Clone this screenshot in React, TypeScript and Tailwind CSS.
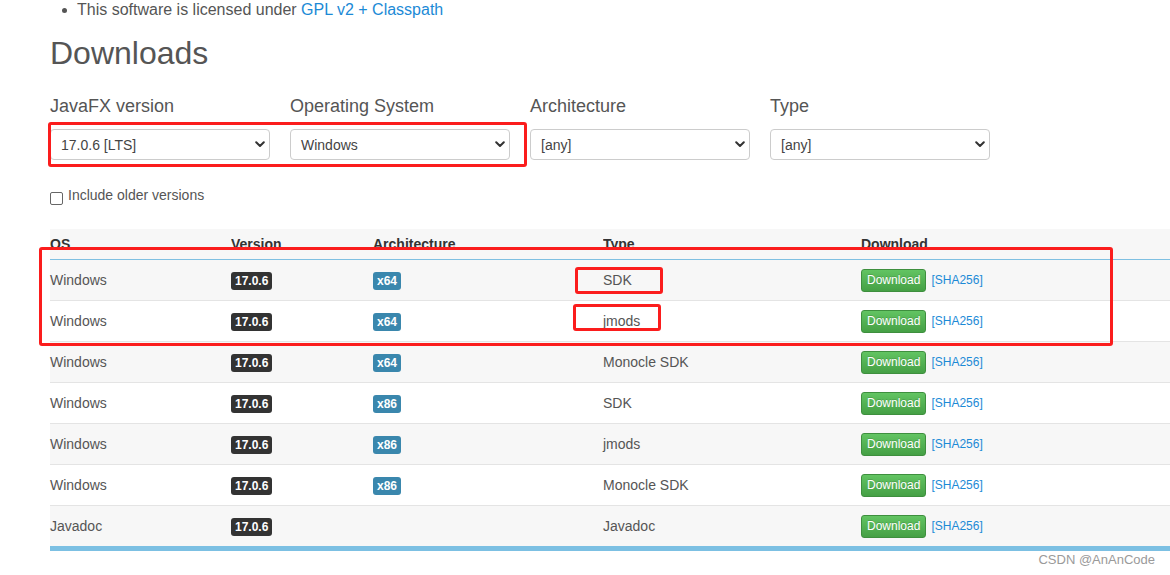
import React from "react";

type Row = { os: string; arch?: string; type: string };

const rows: Row[] = [
  { os: "Windows", arch: "x64", type: "SDK" },
  { os: "Windows", arch: "x64", type: "jmods" },
  { os: "Windows", arch: "x64", type: "Monocle SDK" },
  { os: "Windows", arch: "x86", type: "SDK" },
  { os: "Windows", arch: "x86", type: "jmods" },
  { os: "Windows", arch: "x86", type: "Monocle SDK" },
  { os: "Javadoc", type: "Javadoc" },
];

function Chevron() {
  return (
    <svg width="10" height="7" viewBox="0 0 10 7" className="shrink-0">
      <path d="M1.2 1.2 L5 5 L8.8 1.2" fill="none" stroke="#333" strokeWidth="2" strokeLinecap="round" strokeLinejoin="round" />
    </svg>
  );
}

function Select({ value }: { value: string }) {
  return (
    <div className="mt-[11px] flex h-[31px] w-[220px] items-center justify-between rounded-[4px] border border-[#cccccc] bg-white pl-[10px] pr-[4px] text-[14px] text-[#444]">
      <span className="pt-[1px]">{value}</span>
      <Chevron />
    </div>
  );
}

function Filter({ label, value }: { label: string; value: string }) {
  return (
    <div className="w-[240px]">
      <div className="text-[18px] leading-[24px] text-[#555]">{label}</div>
      <Select value={value} />
    </div>
  );
}

const cols = "grid grid-cols-[181px_142px_230px_258px_1fr]";

export default function App() {
  return (
    <div className="relative h-[575px] w-[1170px] overflow-hidden bg-white font-['Liberation_Sans',Arial,sans-serif]">
      {/* top bullet line */}
      <div className="flex h-[20px] items-center pl-[62px] text-[16px] leading-[20px] text-[#555]">
        <span className="mr-[10px] h-[5px] w-[5px] rounded-full bg-[#555]" />
        <span>
          This software is licensed under <span className="text-[#1c8ad6]">GPL v2 + Classpath</span>
        </span>
      </div>

      <div className="pl-[50px]">
        <h2 className="mt-[17px] text-[32px] leading-[33px] text-[#555]">Downloads</h2>

        <div className="mt-[24px] flex">
          <Filter label="JavaFX version" value="17.0.6 [LTS]" />
          <Filter label="Operating System" value="Windows" />
          <Filter label="Architecture" value="[any]" />
          <Filter label="Type" value="[any]" />
        </div>

        <div className="mt-[25px] flex h-[20px] items-start text-[14px] leading-[20px] text-[#555]">
          <span className="mt-[7px] h-[13px] w-[13px] rounded-[2px] border border-[#666] bg-white" />
          <span className="ml-[5px]">Include older versions</span>
        </div>

        <div className="mt-[24px] w-[1120px]">
          <div className={`${cols} h-[31px] border-b border-[#7fc0e2] bg-[#f7f7f7] text-[14px] font-bold leading-[20px] text-[#333]`}>
            {["OS", "Version", "Architecture", "Type", "Download"].map((h) => (
              <div key={h} className="h-[19px] overflow-hidden pt-[5px]">
                {h}
              </div>
            ))}
          </div>
          {rows.map((r, i) => (
            <div
              key={i}
              className={`${cols} items-center text-[14px] text-[#555] ${
                i % 2 === 0 ? "bg-[#f7f7f7]" : "bg-white"
              } ${i < rows.length - 1 ? "h-[41px] border-b border-[#e4e4e4]" : "h-[40px]"}`}
            >
              <div>{r.os}</div>
              <div>
                <span className="inline-flex h-[18px] items-center rounded-[3px] bg-[#333] px-[4px] text-[12px] font-bold leading-none text-white">
                  17.0.6
                </span>
              </div>
              <div>
                {r.arch && (
                  <span className="inline-flex h-[18px] items-center rounded-[3px] bg-[#3a87ad] px-[4px] text-[12px] font-bold leading-none text-white">
                    {r.arch}
                  </span>
                )}
              </div>
              <div>{r.type}</div>
              <div className="flex items-center">
                <span className="inline-flex h-[23px] items-center rounded-[3px] border border-[#3e8f3e] bg-linear-to-b from-[#62c462] to-[#45a045] px-[5px] text-[12px] leading-none text-white [text-shadow:0_-1px_0_rgba(0,0,0,0.15)]">
                  Download
                </span>
                <span className="ml-[5px] text-[12px] text-[#1c8ad6]">[SHA256]</span>
              </div>
            </div>
          ))}
          <div className="h-[5px] bg-[#7cc0e3]" />
        </div>
      </div>

      {/* annotation boxes */}
      <div className="pointer-events-none absolute left-[48px] top-[122px] h-[45px] w-[479px] rounded-[3px] border-[3px] border-[#fb1d1d]" />
      <div className="pointer-events-none absolute left-[39px] top-[247px] h-[99px] w-[1074px] rounded-[3px] border-[3px] border-[#fb1d1d]" />
      <div className="pointer-events-none absolute left-[575px] top-[267px] h-[27px] w-[88px] rounded-[3px] border-[3px] border-[#fb1d1d]" />
      <div className="pointer-events-none absolute left-[573px] top-[304px] h-[27px] w-[88px] rounded-[3px] border-[3px] border-[#fb1d1d]" />

      {/* watermark */}
      <div className="absolute right-[15px] top-[551px] text-[13px] leading-[18px] text-[#9a9a9a]">CSDN @AnAnCode</div>
    </div>
  );
}
